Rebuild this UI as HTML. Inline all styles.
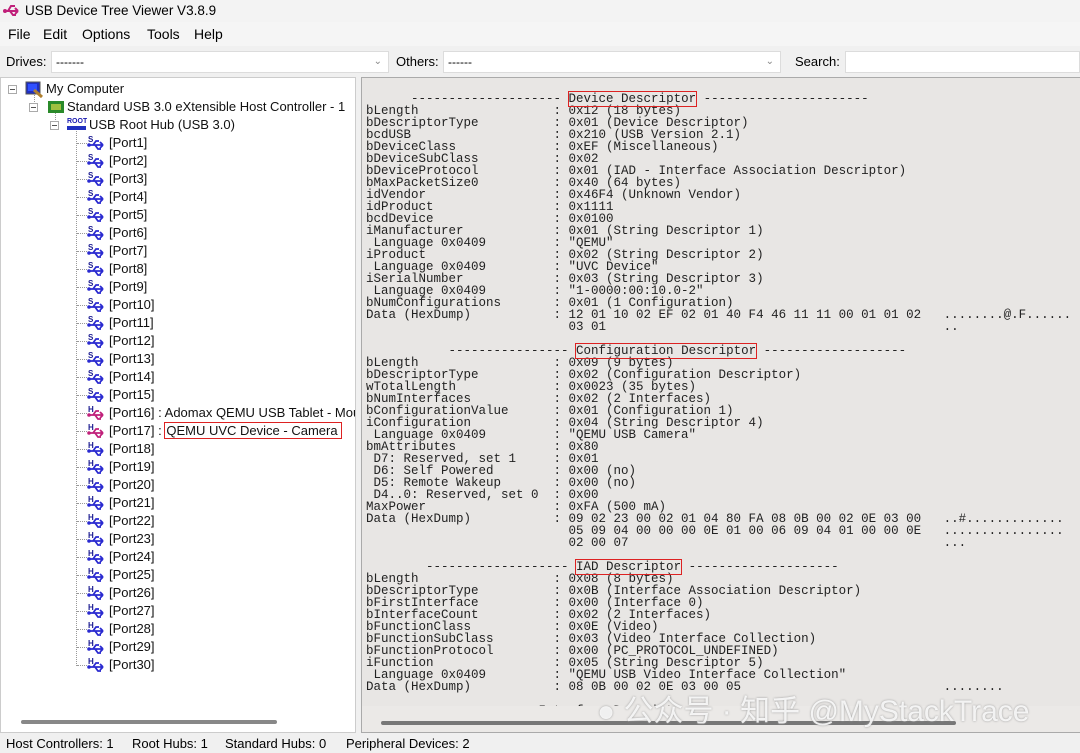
<!DOCTYPE html>
<html><head><meta charset="utf-8"><style>
*{margin:0;padding:0;box-sizing:border-box}
body{width:1080px;height:753px;overflow:hidden;background:#f0f0f0;font-family:"Liberation Sans",sans-serif;position:relative}
.abs{position:absolute}
#title{left:0;top:0;width:1080px;height:22px;background:#f3f3f3;font-size:13.5px;line-height:22px}
#menu{left:0;top:22px;width:1080px;height:24px;background:#f5f5f5;font-size:14px;line-height:24px}
#menu span{position:absolute;top:0}
.lbl{font-size:13px;line-height:16px}
.combo{background:#fff;border:1px solid #dcdcdc;height:22px;top:51px;font-size:12px;line-height:20px;padding-left:4px}
.chev{position:absolute;right:6px;top:0;color:#888;font-size:10px}
#left{left:0;top:77px;width:356px;height:656px;background:#fff;border:1px solid #ccc;overflow:hidden}
#right{left:361px;top:77px;width:719px;height:656px;background:#e8e6e4;border:1px solid #aaa;border-right:none;overflow:hidden}
.row{position:absolute;font-size:13px;line-height:18px;white-space:nowrap;color:#111}
pre{position:absolute;left:4px;top:15px;font-family:"Liberation Mono",monospace;font-size:12.5px;line-height:12px;color:#222;letter-spacing:0}
.box{outline:1.5px solid #d22;outline-offset:0}
.vl{position:absolute;border-left:1px dotted #999}
.hl{position:absolute;border-top:1px dotted #999;height:0}
.exp{position:absolute;width:9px;height:9px;border:1px solid #aaa;background:#fff}
.exp::after{content:"";position:absolute;left:1px;top:3px;width:5px;border-top:1px solid #555}
#status{left:0;top:735px;width:1080px;height:18px;font-size:13px;line-height:18px;background:#f0f0f0}
#status span{position:absolute;top:0}
</style></head><body>
<div id="title" class="abs">
<svg class="abs" style="left:3px;top:4px" width="18" height="14" viewBox="0 0 18 14"><path d="M1 7h14M15 7l-3-3M15 7l-3 3M5 7l3-5h4M7 7l3 4h3" stroke="#c0207a" stroke-width="2" fill="none"/><circle cx="2" cy="7" r="2" fill="#c0207a"/></svg>
<span class="abs" style="left:25px;top:0">USB Device Tree Viewer V3.8.9</span></div>
<div id="menu" class="abs"><span style="left:8px">File</span><span style="left:43px">Edit</span><span style="left:82px">Options</span><span style="left:147px">Tools</span><span style="left:194px">Help</span></div>
<span class="abs lbl" style="left:6px;top:54px">Drives:</span>
<div class="abs combo" style="left:51px;width:338px">-------<span class="chev">&#8964;</span></div>
<span class="abs lbl" style="left:396px;top:54px">Others:</span>
<div class="abs combo" style="left:443px;width:338px">------<span class="chev">&#8964;</span></div>
<span class="abs lbl" style="left:795px;top:54px">Search:</span>
<div class="abs combo" style="left:845px;width:235px"></div>

<div id="left" class="abs">
<div class="vl" style="left:33px;top:12px;height:16px"></div>
<div class="vl" style="left:54px;top:30px;height:16px"></div>
<div class="vl" style="left:75px;top:48px;height:540px"></div>
<div class="exp" style="left:7px;top:7px"></div>
<div class="exp" style="left:28px;top:25px"></div>
<div class="exp" style="left:49px;top:43px"></div>
<svg class="abs" style="left:24px;top:3px" width="18" height="17"><rect x="1" y="1" width="14" height="12" fill="#2030c0" stroke="#555"/><rect x="3" y="3" width="9" height="7" fill="#3050ff"/><path d="M9 9l8 7" stroke="#b08030" stroke-width="3"/></svg>
<div class="row" style="left:45px;top:2px">My Computer</div>
<svg class="abs" style="left:46px;top:22px" width="18" height="14"><rect x="1" y="1" width="16" height="12" fill="#2a8a2a"/><rect x="4" y="4" width="10" height="6" fill="#a0c040"/></svg>
<div class="row" style="left:66px;top:20px">Standard USB 3.0 eXtensible Host Controller - 1</div>
<svg class="abs" style="left:66px;top:38px" width="20" height="16"><text x="0" y="7" font-size="7" font-weight="bold" fill="#1a1ab0" font-family="Liberation Sans">ROOT</text><rect x="0" y="10" width="19" height="4" fill="#2030c0"/></svg>
<div class="row" style="left:88px;top:38px">USB Root Hub (USB 3.0)</div>

<div id="ports"></div>
<div class="abs" style="left:20px;top:642px;width:256px;height:4px;background:#888;border-radius:2px"></div>
</div>

<div id="right" class="abs">
<pre>
      -------------------- <span class="box">Device Descriptor</span> ----------------------
bLength                  : 0x12 (18 bytes)
bDescriptorType          : 0x01 (Device Descriptor)
bcdUSB                   : 0x210 (USB Version 2.1)
bDeviceClass             : 0xEF (Miscellaneous)
bDeviceSubClass          : 0x02
bDeviceProtocol          : 0x01 (IAD - Interface Association Descriptor)
bMaxPacketSize0          : 0x40 (64 bytes)
idVendor                 : 0x46F4 (Unknown Vendor)
idProduct                : 0x1111
bcdDevice                : 0x0100
iManufacturer            : 0x01 (String Descriptor 1)
 Language 0x0409         : "QEMU"
iProduct                 : 0x02 (String Descriptor 2)
 Language 0x0409         : "UVC Device"
iSerialNumber            : 0x03 (String Descriptor 3)
 Language 0x0409         : "1-0000:00:10.0-2"
bNumConfigurations       : 0x01 (1 Configuration)
Data (HexDump)           : 12 01 10 02 EF 02 01 40 F4 46 11 11 00 01 01 02   ........@.F......
                           03 01                                             ..

           ---------------- <span class="box">Configuration Descriptor</span> -------------------
bLength                  : 0x09 (9 bytes)
bDescriptorType          : 0x02 (Configuration Descriptor)
wTotalLength             : 0x0023 (35 bytes)
bNumInterfaces           : 0x02 (2 Interfaces)
bConfigurationValue      : 0x01 (Configuration 1)
iConfiguration           : 0x04 (String Descriptor 4)
 Language 0x0409         : "QEMU USB Camera"
bmAttributes             : 0x80
 D7: Reserved, set 1     : 0x01
 D6: Self Powered        : 0x00 (no)
 D5: Remote Wakeup       : 0x00 (no)
 D4..0: Reserved, set 0  : 0x00
MaxPower                 : 0xFA (500 mA)
Data (HexDump)           : 09 02 23 00 02 01 04 80 FA 08 0B 00 02 0E 03 00   ..#.............
                           05 09 04 00 00 00 0E 01 00 06 09 04 01 00 00 0E   ................
                           02 00 07                                          ...

        ------------------- <span class="box">IAD Descriptor</span> --------------------
bLength                  : 0x08 (8 bytes)
bDescriptorType          : 0x0B (Interface Association Descriptor)
bFirstInterface          : 0x00 (Interface 0)
bInterfaceCount          : 0x02 (2 Interfaces)
bFunctionClass           : 0x0E (Video)
bFunctionSubClass        : 0x03 (Video Interface Collection)
bFunctionProtocol        : 0x00 (PC_PROTOCOL_UNDEFINED)
iFunction                : 0x05 (String Descriptor 5)
 Language 0x0409         : "QEMU USB Video Interface Collection"
Data (HexDump)           : 08 0B 00 02 0E 03 00 05                           ........

                       Interface Descriptor
</pre>
<div class="abs" style="left:0;top:628px;width:719px;height:28px;background:#ebe9e7"></div>
<div class="abs" style="left:19px;top:643px;width:575px;height:4px;background:#777;border-radius:2px"></div>
<div class="abs" style="left:235px;top:608px;font-family:'Liberation Sans','Noto Sans CJK SC',sans-serif;font-size:30px;color:rgba(255,255,255,0.85);text-shadow:0 0 2px #999;white-space:nowrap">● 公众号 · 知乎 @MyStackTrace</div>
</div>

<div id="status" class="abs"><span style="left:6px">Host Controllers: 1</span><span style="left:132px">Root Hubs: 1</span><span style="left:225px">Standard Hubs: 0</span><span style="left:346px">Peripheral Devices: 2</span></div>

<script>
var h='';
for(var i=1;i<=30;i++){
 var y=56+(i-1)*18;
 var L=i<=15?'S':'H';
 var red=(i==16||i==17);
 h+='<div class="hl" style="left:76px;top:'+(y+9)+'px;width:10px"></div>';
 h+='<svg class="abs" style="left:86px;top:'+(y+1)+'px" width="20" height="16" viewBox="0 0 20 16"><text x="1" y="7" font-size="8" font-weight="bold" fill="#1a1a90" font-family="Liberation Sans">'+L+'</text><path d="M1 10h15M16 10l-3-3M16 10l-3 3M6 10l3-4h3M8 10l3 4h3" stroke="'+(red?'#c0207a':'#2a2ad0')+'" stroke-width="1.8" fill="none"/><circle cx="2" cy="10" r="1.8" fill="'+(red?'#c0207a':'#2a2ad0')+'"/></svg>';
 var t='[Port'+i+']';
 if(i==16)t+=' : Adomax QEMU USB Tablet - Mouse';
 if(i==17)t+=' : <span style="outline:1.5px solid #d22;padding:0 3px 0 1px">QEMU UVC Device - Camera</span>';
 h+='<div class="row" style="left:108px;top:'+y+'px">'+t+'</div>';
}
document.getElementById('ports').innerHTML=h;
</script>
</body></html>
